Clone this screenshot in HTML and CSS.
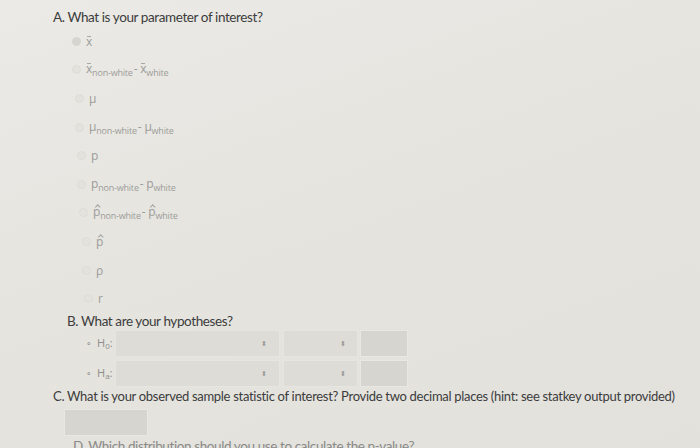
FILE: index.html
```html
<!DOCTYPE html>
<html>
<head>
<meta charset="utf-8">
<link rel="stylesheet" href="styles.css">
</head>
<body>
<div class="page">
  <div class="q q-a">
    <div class="qtitle">A. What is your parameter of interest?</div>
    <div class="options">
      <div class="opt o1"><span class="radio sel"></span><span class="lbl"><span class="bar">x</span></span></div>
      <div class="opt o2"><span class="radio"></span><span class="lbl"><span class="bar">x</span><sub>non-white</sub>- <span class="bar">x</span><sub>white</sub></span></div>
      <div class="opt o3"><span class="radio"></span><span class="lbl">μ</span></div>
      <div class="opt o4"><span class="radio"></span><span class="lbl">μ<sub>non-white</sub>- μ<sub>white</sub></span></div>
      <div class="opt o5"><span class="radio"></span><span class="lbl">p</span></div>
      <div class="opt o6"><span class="radio"></span><span class="lbl">p<sub>non-white</sub>- p<sub>white</sub></span></div>
      <div class="opt o7"><span class="radio"></span><span class="lbl"><span class="hat">p</span><sub>non-white</sub>- <span class="hat">p</span><sub>white</sub></span></div>
      <div class="opt o8"><span class="radio"></span><span class="lbl"><span class="hat">p</span></span></div>
      <div class="opt o9"><span class="radio"></span><span class="lbl">ρ</span></div>
      <div class="opt o10"><span class="radio"></span><span class="lbl">r</span></div>
    </div>
  </div>
  <div class="q q-b">
    <div class="qtitle">B. What are your hypotheses?</div>
    <div class="hyp">
      <div class="hrow">
        <span class="bullet">◦</span><span class="hlabel">H<sub>0</sub>:</span>
        <div class="select s1"><span class="arr">⬍</span></div>
        <div class="select s2"><span class="arr">⬍</span></div>
        <div class="box"></div>
      </div>
      <div class="hrow">
        <span class="bullet">◦</span><span class="hlabel">H<sub>a</sub>:</span>
        <div class="select s1"><span class="arr">⬍</span></div>
        <div class="select s2"><span class="arr">⬍</span></div>
        <div class="box"></div>
      </div>
    </div>
  </div>
  <div class="q q-c">
    <div class="qtitle ctitle">C. What is your observed sample statistic of interest? Provide two decimal places (hint: see statkey output provided)</div>
    <div class="box cbox"></div>
  </div>
  <div class="q q-d">
    <div class="qtitle">D. Which distribution should you use to calculate the p-value?</div>
  </div>
</div>
</body>
</html>
```
FILE: styles.css
```css
html, body {
  margin: 0;
  padding: 0;
}
body {
  width: 700px;
  height: 448px;
  overflow: hidden;
  background: linear-gradient(160deg, #ebeae6 0%, #e5e4df 45%, #e2e1db 100%);
  font-family: Lato, "Open Sans", sans-serif;
  color: #3a3a3a;
}
.page {
  padding: 9px 0 0 53px;
}
.qtitle {
  font-size: 13.5px;
  line-height: 17px;
  letter-spacing: -0.4px;
  color: #3c3c3c;
  white-space: nowrap;
}
.ctitle {
  font-size: 13px;
  letter-spacing: -0.3px;
}
.options {
  display: flex;
  flex-direction: column;
  padding: 1px 0 0 19px;
}
.opt {
  display: flex;
  align-items: center;
  height: 28.6px;
  gap: 5px;
}
.o3, .o4 { padding-left: 3px; }
.o5, .o6 { padding-left: 5px; }
.o7 { padding-left: 7px; }
.o8, .o9 { padding-left: 10px; }
.o10 { padding-left: 12px; }
.radio {
  width: 7px;
  height: 7px;
  border-radius: 50%;
  border: 1px solid #dedcd7;
  background: #e3e2dd;
}
.radio.sel {
  background: #d6d5d0;
  border-color: #d6d5d0;
}
.lbl {
  font-family: "Open Sans", sans-serif;
  font-size: 12px;
  color: #9c9c9a;
  letter-spacing: -0.2px;
}
.lbl sub {
  font-size: 9px;
  vertical-align: -3px;
  margin-right: 1px;
}
.bar, .hat {
  position: relative;
  display: inline-block;
}
.bar::before {
  content: "";
  position: absolute;
  left: 1px;
  right: 1px;
  top: 3px;
  border-top: 1px solid #a8a8a6;
}
.hat::before {
  content: "";
  position: absolute;
  left: 2.5px;
  top: 2px;
  width: 2.5px;
  height: 2.5px;
  border-top: 1px solid #a2a2a0;
  border-left: 1px solid #a2a2a0;
  transform: rotate(45deg);
}
.q-b {
  padding: 0 0 0 14px;
}
.hyp {
  display: flex;
  flex-direction: column;
  gap: 3px;
  padding-left: 20px;
}
.hrow {
  display: flex;
  align-items: center;
  height: 27px;
}
.hrow > * {
  flex: none;
}
.bullet {
  font-size: 10px;
  color: #8a8a88;
  width: 10px;
  overflow: visible;
}
.hlabel {
  font-family: "Open Sans", sans-serif;
  font-size: 11px;
  color: #8e8e8c;
  width: 18px;
  white-space: nowrap;
}
.hlabel sub {
  font-size: 8px;
  vertical-align: -2px;
}
.select {
  height: 27px;
  background: #dedcd7;
  border: 1px solid #e6e5e1;
  box-sizing: border-box;
  display: flex;
  align-items: center;
  justify-content: flex-end;
}
.s1 {
  width: 165px;
  padding-right: 12px;
}
.s2 {
  width: 75px;
  margin-left: 3px;
  padding-right: 11px;
}
.arr {
  font-size: 7px;
  color: #9a9a98;
}
.box {
  width: 48px;
  height: 27px;
  margin-left: 2px;
  background: #d6d5d0;
  border: 1px solid #e8e7e3;
  box-sizing: border-box;
}
.q-c {
  padding-top: 1px;
}
.cbox {
  width: 84px;
  height: 27px;
  margin: 4px 0 0 11px;
}
.q-d {
  padding: 2px 0 0 20px;
}
.q-d .qtitle {
  color: #8a8a88;
}
```
